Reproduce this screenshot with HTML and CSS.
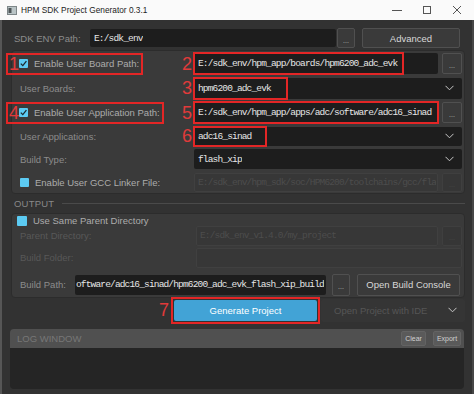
FILE: index.html
```html
<!DOCTYPE html>
<html lang="en">
<head>
<meta charset="UTF-8" />
<meta name="viewport" content="width=device-width, initial-scale=1" />
<title>HPM SDK Project Generator 0.3.1</title>
<link rel="stylesheet" href="styles.css">
</head>
<body>

<div class="titlebar">
  <svg class="app-icon" width="10" height="9" viewBox="0 0 10 9">
    <rect x="0.5" y="0.5" width="9" height="8" fill="#b9c4c6" stroke="#7d8688" />
    <rect x="1.5" y="2" width="3" height="5" fill="#4d5557" />
  </svg>
  <span class="title">HPM SDK Project Generator 0.3.1</span>
  <div class="win-ctrls">
    <svg width="10" height="10" viewBox="0 0 10 10"><line x1="0" y1="5.5" x2="10" y2="5.5" stroke="#555" /></svg>
    <svg width="10" height="10" viewBox="0 0 10 10"><rect x="1.5" y="1.5" width="7" height="7" fill="none" stroke="#555" /></svg>
    <svg width="10" height="10" viewBox="0 0 10 10"><path d="M1 1 L9 9 M9 1 L1 9" stroke="#555" /></svg>
  </div>
</div>

<div class="window">

  <div class="row-top">
    <span class="label">SDK ENV Path:</span>
    <div class="field mono"><span class="val">E:/sdk_env</span></div>
    <button class="btn dots">...</button>
    <button class="btn">Advanced</button>
  </div>

  <div class="group grid-main">
    <div class="cell">
      <span class="anno">
        <span class="num">1</span>
        <span class="check on"><svg width="9" height="9" viewBox="0 0 9 9"><path d="M1.8 4.6 L3.8 6.6 L7.4 2.2" fill="none" stroke="#1b2a30" stroke-width="1.3" /></svg></span>
        <span class="check-text">Enable User Board Path:</span>
      </span>
      <span class="num num-side">2</span>
    </div>
    <div class="cell">
      <div class="field mono">
        <span class="hl hl-2">E:/sdk_env/hpm_app/boards/hpm6200_adc_evk</span>
      </div>
    </div>
    <button class="btn dots">...</button>

    <div class="cell"><span class="label">User Boards:</span><span class="num num-side">3</span></div>
    <div class="cell span2">
      <div class="field mono combo">
        <span class="hl hl-3">hpm6200_adc_evk</span>
        <svg class="chev" width="9" height="6" viewBox="0 0 9 6"><polyline points="0.5,0.8 4.5,4.8 8.5,0.8" fill="none" stroke="#c8c8c8" /></svg>
      </div>
    </div>

    <div class="cell">
      <span class="anno">
        <span class="num">4</span>
        <span class="check on"><svg width="9" height="9" viewBox="0 0 9 9"><path d="M1.8 4.6 L3.8 6.6 L7.4 2.2" fill="none" stroke="#1b2a30" stroke-width="1.3" /></svg></span>
        <span class="check-text">Enable User Application Path:</span>
      </span>
      <span class="num num-side">5</span>
    </div>
    <div class="cell">
      <div class="field mono">
        <span class="hl hl-5">E:/sdk_env/hpm_app/apps/adc/software/adc16_sinad</span>
      </div>
    </div>
    <button class="btn dots">...</button>

    <div class="cell"><span class="label">User Applications:</span><span class="num num-side">6</span></div>
    <div class="cell span2">
      <div class="field mono combo">
        <span class="hl hl-6">adc16_sinad</span>
        <svg class="chev" width="9" height="6" viewBox="0 0 9 6"><polyline points="0.5,0.8 4.5,4.8 8.5,0.8" fill="none" stroke="#c8c8c8" /></svg>
      </div>
    </div>

    <div class="cell"><span class="label">Build Type:</span></div>
    <div class="cell span2">
      <div class="field mono combo">
        <span class="val">flash_xip</span>
        <svg class="chev" width="9" height="6" viewBox="0 0 9 6"><polyline points="0.5,0.8 4.5,4.8 8.5,0.8" fill="none" stroke="#c8c8c8" /></svg>
      </div>
    </div>

    <div class="cell">
      <span class="check"></span>
      <span class="check-text">Enable User GCC Linker File:</span>
    </div>
    <div class="cell">
      <div class="field mono disabled"><span class="val">E:/sdk_env/hpm_sdk/soc/HPM6200/toolchains/gcc/fla</span></div>
    </div>
    <button class="btn dots disabled">...</button>
  </div>

  <div class="section-title"><span>OUTPUT</span></div>

  <div class="group out-group">
    <div class="cell check-row">
      <span class="check"></span>
      <span class="check-text">Use Same Parent Directory</span>
    </div>
    <div class="grid-out">
      <div class="cell"><span class="label dim">Parent Directory:</span></div>
      <div class="field mono disabled"><span class="val">E:/sdk_env_v1.4.0/my_project</span></div>
      <button class="btn dots disabled">...</button>

      <div class="cell"><span class="label dim">Build Folder:</span></div>
      <div class="field mono disabled span2"></div>
    </div>
    <div class="build-row">
      <span class="label">Build Path:</span>
      <div class="field mono scrolled"><span class="val">oftware/adc16_sinad/hpm6200_adc_evk_flash_xip_build</span></div>
      <button class="btn dots">...</button>
      <button class="btn console">Open Build Console</button>
    </div>
  </div>

  <div class="gen-row">
    <span class="num num-gen">7</span>
    <span class="anno-gen"><button class="btn-generate">Generate Project</button></span>
    <div class="ide-combo">
      <span>Open Project with IDE</span>
      <svg class="chev" width="9" height="6" viewBox="0 0 9 6"><polyline points="0.5,0.8 4.5,4.8 8.5,0.8" fill="none" stroke="#c8c8c8" /></svg>
    </div>
  </div>

  <div class="log">
    <div class="log-head">
      <span class="log-title">LOG WINDOW</span>
      <button class="btn-small">Clear</button>
      <button class="btn-small">Export</button>
    </div>
    <div class="log-body"></div>
  </div>

</div>

</body>
</html>
```

FILE: styles.css
```css
html, body {
  margin: 0;
  padding: 0;
}
body {
  width: 474px;
  height: 394px;
  overflow: hidden;
  background: #323232;
  font-family: "Liberation Sans", Arial, sans-serif;
  font-size: 9.5px;
  color: #9a9a9a;
}
button {
  font-family: inherit;
  margin: 0;
  padding: 0;
}

/* title bar */
.titlebar {
  height: 20px;
  background: #fafafa;
  display: flex;
  align-items: center;
  padding-left: 7px;
  box-sizing: border-box;
}
.app-icon {
  display: block;
}
.title {
  margin-left: 4px;
  font-size: 8.3px;
  color: #222;
}
.win-ctrls {
  margin-left: auto;
  display: flex;
  gap: 20px;
  padding-right: 12px;
}
.win-ctrls svg {
  display: block;
}

/* main window */
.window {
  height: 374px;
  box-sizing: border-box;
  border-left: 2px solid #565656;
  border-right: 2px solid #474747;
  padding: 8px 7px 0 9px;
}
.label {
  color: #8c8c8c;
  white-space: nowrap;
}
.label.dim {
  color: #585858;
}
.mono {
  font-family: "Liberation Mono", "Courier New", monospace;
  font-size: 9.5px;
  letter-spacing: -0.84px;
  color: #e6e6e6;
}
.field {
  background: #1d1d1d;
  border-radius: 2px;
  display: flex;
  align-items: center;
  height: 100%;
  box-sizing: border-box;
  min-width: 0;
  white-space: nowrap;
}
.cell > .field {
  flex: 1;
}
.field .val {
  padding-left: 4px;
  overflow: hidden;
}
.field.disabled {
  background: #373737;
  border: 1px solid #404040;
  color: #4d4d4d;
  overflow: hidden;
}
.field.disabled .val {
  padding-left: 3px;
}
.btn {
  background: #3a3a3a;
  border: 1px solid #505050;
  border-radius: 2px;
  color: #d8d8d8;
  font-size: 9.5px;
  height: 100%;
}
.btn.dots {
  font-size: 7px;
  color: #b8b8b8;
  padding-top: 4px;
}
.btn.disabled {
  background: #363636;
  border-color: #3f3f3f;
  color: #4a4a4a;
}

.row-top {
  display: grid;
  grid-template-columns: 78px 246px 18px 104px;
  column-gap: 1px;
  height: 19px;
  align-items: center;
}
.row-top .label {
  padding-left: 3px;
}
.row-top .btn:last-child {
  margin-left: 6px;
  height: 20px;
}
.row-top .field {
  height: 18px;
}

/* groups */
.group {
  background: #3a3a3a;
  border: 1px solid #2c2c2c;
  border-radius: 4px;
}
.grid-main {
  margin-top: 3px;
  padding: 2px 4px 1px 8px;
  display: grid;
  grid-template-columns: 170px 244px 20px;
  grid-template-rows: 21px 21px 21px 19px 20px 19px;
  column-gap: 4px;
  row-gap: 3.5px;
}
.cell {
  display: flex;
  align-items: center;
  position: relative;
  min-width: 0;
}
.span2 {
  grid-column: span 2;
}
.check {
  width: 9px;
  height: 9px;
  background: #5ccbf3;
  border-radius: 1px;
  flex: none;
  display: flex;
}
.check svg {
  display: block;
}
.check-text {
  margin-left: 6px;
  color: #acacac;
  white-space: nowrap;
}

/* red annotations */
.num {
  font-size: 18px;
  color: #e03a3a;
  line-height: 1;
}
.num-side {
  position: absolute;
  right: -2px;
  top: 50%;
  transform: translateY(-50%);
}
.anno {
  display: flex;
  align-items: center;
  border: 2px solid #e32626;
  height: 22px;
  box-sizing: border-box;
  margin-left: -14px;
  padding: 0 2px 0 1px;
}
.anno .num {
  width: 10px;
}
.hl {
  border: 2px solid #e32626;
  align-self: stretch;
  margin: -1px 0 -1px -1px;
  display: flex;
  align-items: center;
  padding: 0 5px 0 3px;
}
.hl-3 {
  padding-right: 15px;
}
.hl-5 {
  padding-right: 6px;
}
.hl-6 {
  padding-right: 14px;
}
.combo .chev {
  margin-left: auto;
  margin-right: 8px;
}

.section-title {
  height: 19px;
  display: flex;
  align-items: center;
  padding-left: 3px;
  color: #888;
}
.section-title::after {
  content: "";
  flex: 1;
  height: 1px;
  background: #4a4a4a;
  margin-left: 8px;
}
.section-title span {
  letter-spacing: 0.2px;
}

.out-group {
  padding: 1px 4px 0 7px;
}
.check-row {
  height: 10px;
  margin-left: -2px;
  margin-top: 1px;
}
.check-row .check {
  width: 10px;
  height: 10px;
}
.grid-out {
  display: grid;
  grid-template-columns: 172px 242px 20px;
  grid-template-rows: 20px 20px;
  column-gap: 4px;
  row-gap: 2px;
  margin-left: 1px;
}
.build-row {
  display: flex;
  align-items: center;
  height: 22px;
  margin-top: 6px;
  margin-bottom: 1px;
}
.build-row .label {
  width: 55px;
  flex: none;
  padding-left: 1px;
}
.build-row .field {
  width: 251px;
  flex: none;
  height: 20px;
  overflow: hidden;
}
.field.scrolled .val {
  padding-left: 1px;
}
.build-row .dots {
  width: 18px;
  margin-left: 6px;
}
.build-row .console {
  width: 103px;
  margin-left: 7px;
}

/* generate row */
.gen-row {
  display: grid;
  grid-template-columns: 1fr 149px 144px;
  column-gap: 1px;
  height: 27px;
  margin-top: -1px;
  align-items: center;
}
.num-gen {
  justify-self: end;
  margin-right: 1px;
}
.anno-gen {
  border: 2px solid #e32626;
  padding: 1px;
  height: 27px;
  box-sizing: border-box;
  display: flex;
}
.btn-generate {
  flex: 1;
  background: #42a3d6;
  border: none;
  border-radius: 2px;
  color: #fff;
  font-size: 9.5px;
}
.ide-combo {
  display: flex;
  align-items: center;
  height: 23px;
  padding-left: 13px;
  color: #555;
  background: #353535;
  border-radius: 2px;
}
.ide-combo .chev {
  margin-left: auto;
  margin-right: 8px;
}

/* log window */
.log {
  margin-top: 5px;
  margin-left: -1px;
  margin-right: 1px;
  border-radius: 4px;
  overflow: hidden;
}
.log-head {
  height: 19px;
  background: #505050;
  display: flex;
  align-items: center;
  padding: 0 3px 0 7px;
  gap: 7px;
}
.log-title {
  color: #777;
  margin-right: auto;
}
.btn-small {
  height: 15px;
  background: #5a5a5a;
  border: 1px solid #636363;
  border-radius: 2px;
  color: #d0d0d0;
  font-size: 7px;
}
.btn-small:first-of-type {
  width: 25px;
}
.btn-small:last-of-type {
  width: 28px;
}
.log-body {
  height: 41px;
  background: #252525;
}
```
